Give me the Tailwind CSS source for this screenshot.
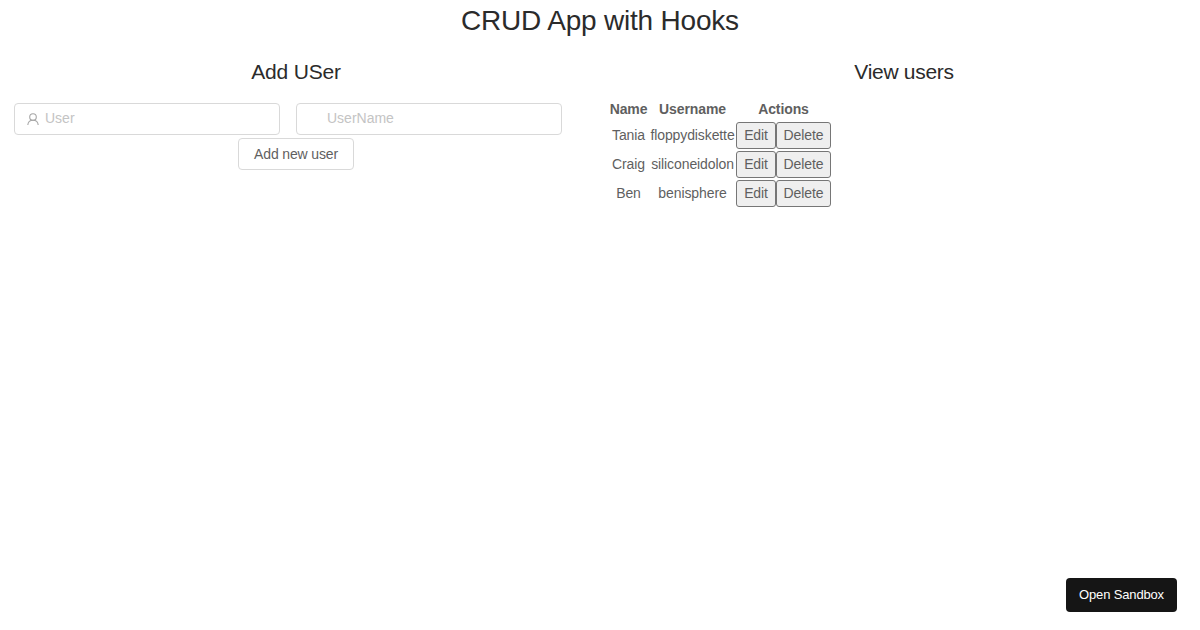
<!DOCTYPE html>
<html lang="en">
  <head>
    <meta charset="UTF-8" />
    <title>CRUD App with Hooks</title>
    <script src="https://cdn.jsdelivr.net/npm/@tailwindcss/browser@4"></script>
  </head>
  <body class="bg-white h-[630px] overflow-hidden relative font-['Liberation_Sans',Arial,sans-serif] text-[14px] text-[#5f5f5f]">
    <h1 class="text-[28px] leading-[34px] tracking-[-0.2px] text-center text-[#2b2b2b] pt-[4px] mb-[20px]">CRUD App with Hooks</h1>
    <div class="flex gap-4">
      <div class="w-[592px]">
        <h2 class="text-[21px] leading-[28px] tracking-[-0.2px] text-center text-[#2b2b2b] mb-[17px]">Add USer</h2>
        <div class="flex gap-4 pl-[14px]">
          <div class="w-[266px] h-[32px] border border-[#d9d9d9] rounded-[4px] flex items-center pl-[11px] pb-[2px]">
            <svg class="w-[14px] h-[14px] mr-[5px] mt-[2px] text-[#a6a6a6]" viewBox="0 0 14 14" fill="none" stroke="currentColor" stroke-width="1.1"><circle cx="7" cy="5" r="3.3" /><path d="M1.8 13c.3-3 2.4-4.700 5.200-4.700s4.900 1.700 5.200 4.700" /></svg>
            <span class="text-[#c4c4c4]">User</span>
          </div>
          <div class="w-[266px] h-[32px] border border-[#d9d9d9] rounded-[4px] flex items-center pl-[30px] pb-[2px]">
            <span class="text-[#c4c4c4]">UserName</span>
          </div>
        </div>
        <div class="flex justify-center mt-[3px]">
          <button class="h-[32px] w-[116px] border border-[#d9d9d9] rounded-[4px] bg-white tracking-[-0.15px] text-[#5f5f5f]">Add new user</button>
        </div>
      </div>
      <div class="w-[592px]">
        <h2 class="text-[21px] leading-[28px] tracking-[-0.3px] text-center text-[#2b2b2b] mb-[13px]">View users</h2>
        <table class="border-separate border-spacing-0 text-center tracking-[-0.1px]">
          <thead>
            <tr class="h-[20px] font-bold">
              <th class="px-[1px] pb-[1px] w-[41px]">Name</th>
              <th class="px-[1px] pb-[1px] w-[87px]">Username</th>
              <th class="px-[1px] pb-[1px]" colspan="2">Actions</th>
            </tr>
          </thead>
          <tbody>
            <tr class="h-[29px]">
              <td>Tania</td>
              <td>floppydiskette</td>
              <td><div class="flex"><button class="h-[27px] w-[40px] border border-[#767676] rounded-[3px] bg-[#efefef]">Edit</button><button class="h-[27px] w-[55px] border border-[#767676] rounded-[3px] bg-[#efefef]">Delete</button></div></td>
            </tr>
            <tr class="h-[29px]">
              <td>Craig</td>
              <td>siliconeidolon</td>
              <td><div class="flex"><button class="h-[27px] w-[40px] border border-[#767676] rounded-[3px] bg-[#efefef]">Edit</button><button class="h-[27px] w-[55px] border border-[#767676] rounded-[3px] bg-[#efefef]">Delete</button></div></td>
            </tr>
            <tr class="h-[29px]">
              <td>Ben</td>
              <td>benisphere</td>
              <td><div class="flex"><button class="h-[27px] w-[40px] border border-[#767676] rounded-[3px] bg-[#efefef]">Edit</button><button class="h-[27px] w-[55px] border border-[#767676] rounded-[3px] bg-[#efefef]">Delete</button></div></td>
            </tr>
          </tbody>
        </table>
      </div>
    </div>
    <div class="absolute left-[1066px] top-[578px] w-[111px] h-[34px] bg-[#151515] rounded-[4px] text-white text-[13px] tracking-[-0.15px] flex items-center justify-center">Open Sandbox</div>
  </body>
</html>
